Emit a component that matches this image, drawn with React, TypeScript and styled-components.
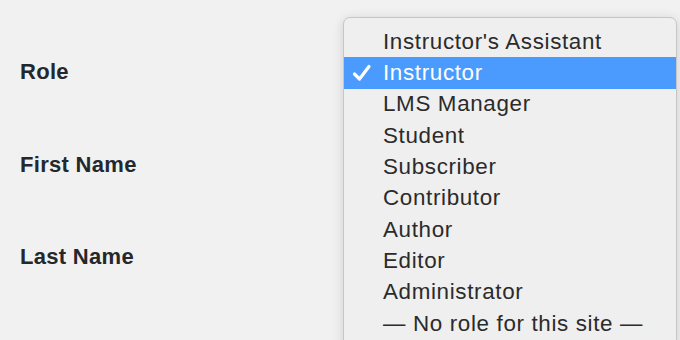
import React from "react";
import styled, { createGlobalStyle } from "styled-components";

const GlobalStyle = createGlobalStyle`
  html, body {
    margin: 0;
    padding: 0;
    background: #f1f1f1;
    overflow: hidden;
  }
  body {
    font-family: "Liberation Sans", Arial, sans-serif;
  }
`;

const roles = [
  "Instructor's Assistant",
  "Instructor",
  "LMS Manager",
  "Student",
  "Subscriber",
  "Contributor",
  "Author",
  "Editor",
  "Administrator",
  "— No role for this site —",
];

const Page = styled.div`
  position: relative;
  width: 680px;
  height: 340px;
`;

const FormTable = styled.div`
  display: flex;
  flex-direction: column;
  padding: 26px 0 0 20px;
`;

const Row = styled.div`
  display: flex;
  align-items: center;
  height: 92.5px;
`;

const Label = styled.label`
  font-size: 22px;
  font-weight: 700;
  color: #23282d;
  letter-spacing: 0.3px;
`;

const Menu = styled.ul`
  position: absolute;
  left: 343px;
  top: 17px;
  width: 332px;
  margin: 0;
  padding: 8px 0 10px;
  list-style: none;
  background: #efefef;
  border: 1px solid #c6c6c6;
  border-radius: 7px;
  box-shadow: 0 2px 12px rgba(0, 0, 0, 0.14);
`;

const Option = styled.li<{ $selected?: boolean }>`
  position: relative;
  display: flex;
  align-items: center;
  height: 31.33px;
  padding-left: 39px;
  font-size: 22.4px;
  letter-spacing: 0.65px;
  color: ${(p) => (p.$selected ? "#ffffff" : "#2b2b2b")};
  background: ${(p) => (p.$selected ? "#4a9bfd" : "transparent")};
  white-space: nowrap;
`;

const Check = styled.svg`
  position: absolute;
  left: 8px;
  top: 50%;
  transform: translateY(-50%);
`;

export default function App() {
  return (
    <Page>
      <GlobalStyle />
      <FormTable>
        <Row>
          <Label>Role</Label>
        </Row>
        <Row>
          <Label>First Name</Label>
        </Row>
        <Row>
          <Label>Last Name</Label>
        </Row>
      </FormTable>
      <Menu>
        {roles.map((role) => (
          <Option key={role} $selected={role === "Instructor"}>
            {role === "Instructor" && (
              <Check width="20" height="18" viewBox="0 0 20 18">
                <path
                  d="M2.5 10 L7.5 15 L17 2.5"
                  fill="none"
                  stroke="#fff"
                  strokeWidth="3.2"
                  strokeLinecap="round"
                  strokeLinejoin="round"
                />
              </Check>
            )}
            {role}
          </Option>
        ))}
      </Menu>
    </Page>
  );
}
